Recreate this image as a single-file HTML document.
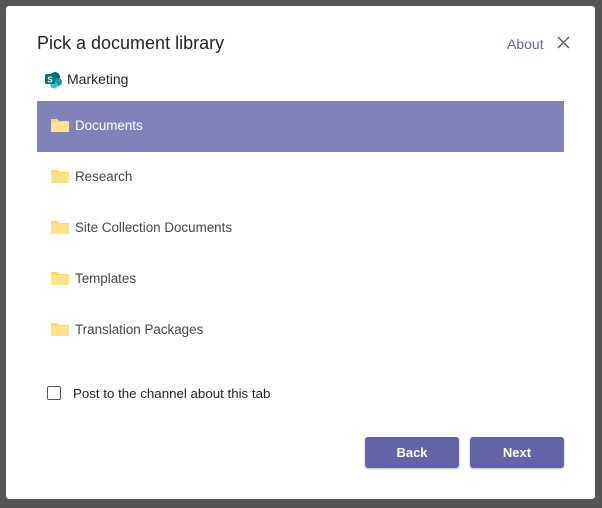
<!DOCTYPE html>
<html><head><style>
body{margin:0;width:602px;height:508px;background:#555;font-family:"Liberation Sans",sans-serif;position:relative;overflow:hidden}
.dlg{position:absolute;left:6px;top:6px;width:589px;height:493px;background:#fff;border-radius:3px}
.t{position:absolute;left:31px;top:27px;font-size:18px;color:#252423}
.about{position:absolute;left:501px;top:30px;font-size:14px;color:#6264a7}
.x{position:absolute;left:551px;top:30px}
.site{position:absolute;left:39px;top:65px;font-size:14px;color:#252423}
.site span{position:absolute;left:22px;top:0;white-space:nowrap}
.row{position:absolute;left:31px;width:527px;height:51px;font-size:13.4px;color:#484644}
.row.sel{background:#8182b9;color:#fff}
.row svg{position:absolute;left:14px;top:17px}
.row span{position:absolute;left:38px;top:17px}
.cb{position:absolute;left:41px;top:380px;width:12px;height:12px;border:1px solid #555;border-radius:2px}
.cbl{position:absolute;left:67px;top:380px;font-size:13.3px;color:#252423}
.btn{position:absolute;top:431px;width:94px;height:31px;background:#6264a7;border-radius:3px;color:#fff;font-size:13px;font-weight:bold;text-align:center;line-height:31px;box-shadow:0 1px 2px rgba(0,0,0,.25)}
</style></head><body>
<div class="dlg">
<div class="t">Pick a document library</div>
<div class="about">About</div>
<svg class="x" width="13" height="13" viewBox="0 0 13 13"><path d="M1 1L12 12M12 1L1 12" stroke="#555" stroke-width="1.3"/></svg>
<div class="site"><svg width="18" height="18" viewBox="0 0 18 18" style="position:absolute;left:0;top:0"><circle cx="10" cy="6" r="5" fill="#036c70"/><circle cx="13" cy="11" r="4" fill="#1a9ba1"/><circle cx="9" cy="14" r="3.5" fill="#37c6d0"/><rect x="0" y="3" width="10" height="10" rx="1.5" fill="#03787c"/><text x="5" y="11.5" font-size="8" font-weight="bold" fill="#fff" text-anchor="middle" font-family="Liberation Sans">S</text></svg><span>Marketing</span></div>
<div class="row sel" style="top:95px"><svg width="18" height="14" viewBox="0 0 18 14"><path d="M0 1h6l2 2h10v11H0z" fill="#ffd75e"/><path d="M0 4h18v10H0z" fill="#ffe28a"/></svg><span>Documents</span></div>
<div class="row" style="top:146px"><svg width="18" height="14" viewBox="0 0 18 14"><path d="M0 1h6l2 2h10v11H0z" fill="#ffd75e"/><path d="M0 4h18v10H0z" fill="#ffe28a"/></svg><span>Research</span></div>
<div class="row" style="top:197px"><svg width="18" height="14" viewBox="0 0 18 14"><path d="M0 1h6l2 2h10v11H0z" fill="#ffd75e"/><path d="M0 4h18v10H0z" fill="#ffe28a"/></svg><span>Site Collection Documents</span></div>
<div class="row" style="top:248px"><svg width="18" height="14" viewBox="0 0 18 14"><path d="M0 1h6l2 2h10v11H0z" fill="#ffd75e"/><path d="M0 4h18v10H0z" fill="#ffe28a"/></svg><span>Templates</span></div>
<div class="row" style="top:299px"><svg width="18" height="14" viewBox="0 0 18 14"><path d="M0 1h6l2 2h10v11H0z" fill="#ffd75e"/><path d="M0 4h18v10H0z" fill="#ffe28a"/></svg><span>Translation Packages</span></div>
<div class="cb"></div>
<div class="cbl">Post to the channel about this tab</div>
<div class="btn" style="left:359px">Back</div>
<div class="btn" style="left:464px">Next</div>
</div>
</body></html>
